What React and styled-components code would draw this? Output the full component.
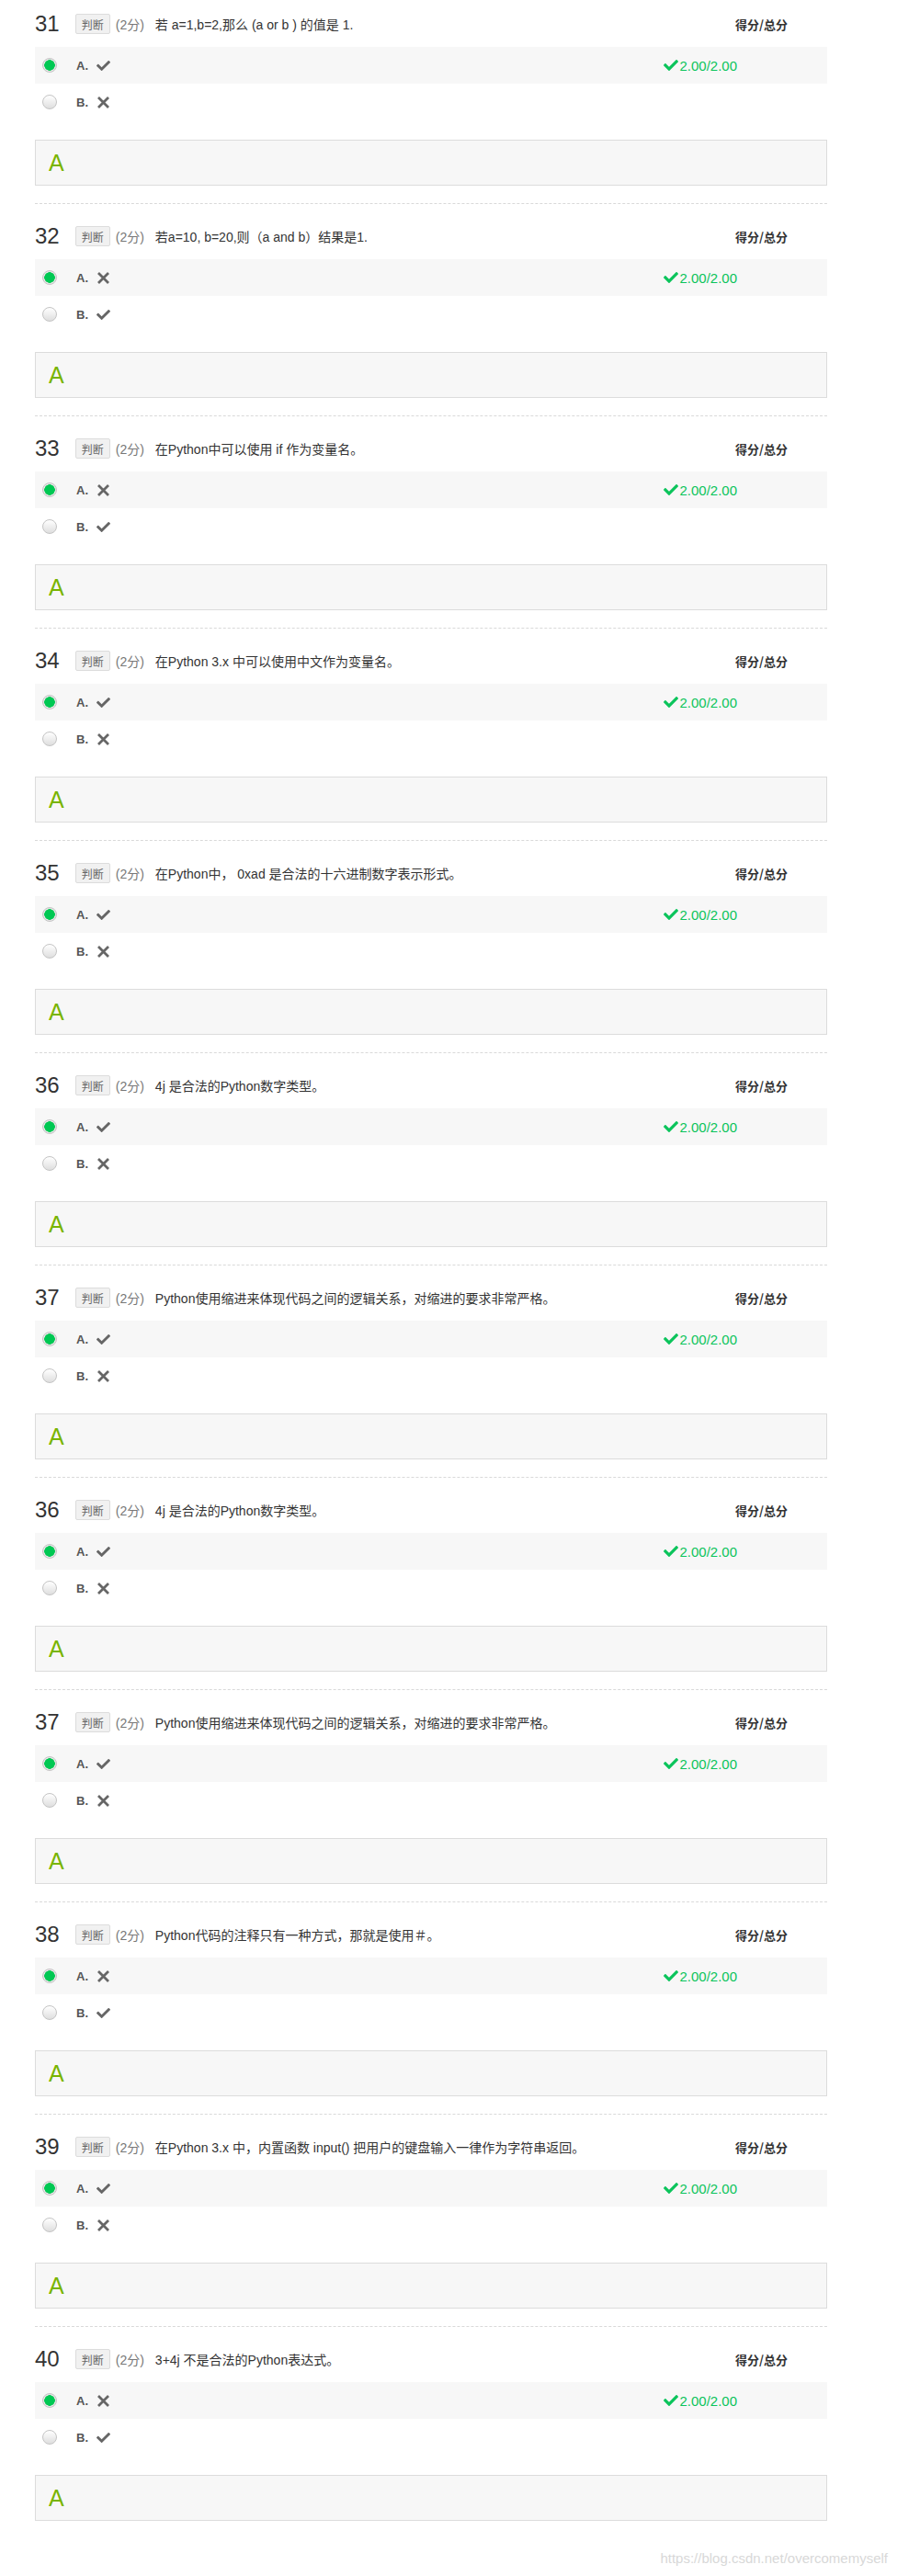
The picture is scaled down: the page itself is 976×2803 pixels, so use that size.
import React from "react";
import styled, { createGlobalStyle } from "styled-components";

const GlobalStyle = createGlobalStyle`
  body {
    margin: 0;
    background: #fff;
    font-family: "Liberation Sans", Arial, "Noto Sans CJK SC", sans-serif;
    color: #333;
  }
`;

const Page = styled.div`
  width: 976px;
  padding-left: 38px;
  box-sizing: border-box;
`;

const List = styled.div`
  width: 862px;
`;

const Question = styled.div`
  padding-top: 10px;
  height: ${(p) => (p.last ? "192px" : "211px")};
  border-bottom: ${(p) => (p.last ? "none" : "1px dashed #d9d9d9")};
  margin-bottom: ${(p) => (p.last ? "0" : "9px")};
`;

const Header = styled.div`
  display: flex;
  align-items: center;
  height: 32px;
  margin-bottom: 9px;
`;

const Num = styled.span`
  font-size: 24px;
  color: #333;
  margin-right: 17px;
  line-height: 1;
`;

const Badge = styled.span`
  display: inline-flex;
  align-items: center;
  justify-content: center;
  height: 22px;
  padding: 0 6px;
  box-sizing: border-box;
  border: 1px solid #dcdcdc;
  border-radius: 2px;
  background: #f1f1f1;
  color: #666;
  font-size: 12px;
  font-family: "Noto Sans CJK SC", sans-serif;
  margin-right: 6px;
`;

const Points = styled.span`
  font-size: 14px;
  color: #777;
  margin-right: 12px;
`;

const Stem = styled.span`
  font-size: 14px;
  color: #333;
`;

const ScoreHead = styled.span`
  margin-left: auto;
  margin-right: 43px;
  font-size: 13px;
  font-weight: bold;
  color: #333;
  font-family: "Noto Sans CJK SC", sans-serif;
`;

const Option = styled.div`
  display: flex;
  align-items: center;
  height: 40px;
  padding-left: 8px;
  background: ${(p) => (p.selected ? "#f7f7f7" : "#fff")};
`;

const Radio = styled.span`
  width: 16px;
  height: 16px;
  border-radius: 50%;
  box-sizing: border-box;
  border: 1px solid #c4c4c4;
  background: ${(p) =>
    p.checked
      ? "radial-gradient(circle, #00c853 0 5.5px, #e6e6e6 6px)"
      : "linear-gradient(#ffffff, #dedede)"};
  margin-right: 21px;
  flex-shrink: 0;
`;

const Letter = styled.span`
  font-size: 13px;
  font-weight: bold;
  color: #555;
  margin-right: 9px;
`;

const Score = styled.span`
  margin-left: auto;
  margin-right: 98px;
  display: flex;
  align-items: center;
  gap: 1px;
  font-size: 15px;
  color: #0bc45b;
`;

const AnswerBox = styled.div`
  margin-top: 21px;
  height: 50px;
  box-sizing: border-box;
  border: 1px solid #dcdcdc;
  background: #f7f7f7;
  display: flex;
  align-items: center;
  padding-left: 14px;
  font-size: 25px;
  color: #78b400;
`;

const Footer = styled.div`
  height: 60px;
  box-sizing: border-box;
  padding-top: 32px;
  text-align: right;
  padding-right: 10px;
  font-size: 15px;
  line-height: 18px;
  color: #d8d8d8;
`;

function Check({ color = "#666", size = 15 }) {
  return (
    <svg width={size} height={size} viewBox="0 0 512 512">
      <path
        fill={color}
        d="M173.9 439.4l-166.4-166.4c-10-10-10-26.2 0-36.2l36.2-36.2c10-10 26.2-10 36.2 0L192 312.7 432.1 72.6c10-10 26.2-10 36.2 0l36.2 36.2c10 10 10 26.2 0 36.2l-294.4 294.4c-10 10-26.2 10-36.2 0z"
      />
    </svg>
  );
}

function Cross() {
  return (
    <svg width="15" height="15" viewBox="0 0 15 15">
      <path d="M2 2L13 13M13 2L2 13" stroke="#666" strokeWidth="2.8" strokeLinecap="butt" />
    </svg>
  );
}

const questions = [
  { n: 31, text: "若 a=1,b=2,那么 (a or b ) 的值是 1.", a: true },
  { n: 32, text: "若a=10, b=20,则（a and b）结果是1.", a: false },
  { n: 33, text: "在Python中可以使用 if 作为变量名。", a: false },
  { n: 34, text: "在Python 3.x 中可以使用中文作为变量名。", a: true },
  { n: 35, text: "在Python中， 0xad 是合法的十六进制数字表示形式。", a: true },
  { n: 36, text: "4j 是合法的Python数字类型。", a: true },
  { n: 37, text: "Python使用缩进来体现代码之间的逻辑关系，对缩进的要求非常严格。", a: true },
  { n: 36, text: "4j 是合法的Python数字类型。", a: true },
  { n: 37, text: "Python使用缩进来体现代码之间的逻辑关系，对缩进的要求非常严格。", a: true },
  { n: 38, text: "Python代码的注释只有一种方式，那就是使用＃。", a: false },
  { n: 39, text: "在Python 3.x 中，内置函数 input() 把用户的键盘输入一律作为字符串返回。", a: true },
  { n: 40, text: "3+4j 不是合法的Python表达式。", a: false },
];

function Mark({ ok }) {
  return ok ? <Check /> : <Cross />;
}

export default function App() {
  return (
    <Page>
      <GlobalStyle />
      <List>
        {questions.map((q, i) => (
          <Question key={i} last={i === questions.length - 1}>
            <Header>
              <Num>{q.n}</Num>
              <Badge>判断</Badge>
              <Points>(2分)</Points>
              <Stem>{q.text}</Stem>
              <ScoreHead>得分/总分</ScoreHead>
            </Header>
            <Option selected>
              <Radio checked />
              <Letter>A.</Letter>
              <Mark ok={q.a} />
              <Score>
                <Check color="#0bc45b" size={16} />
                2.00/2.00
              </Score>
            </Option>
            <Option>
              <Radio />
              <Letter>B.</Letter>
              <Mark ok={!q.a} />
            </Option>
            <AnswerBox>A</AnswerBox>
          </Question>
        ))}
      </List>
      <Footer>https://blog.csdn.net/overcomemyself</Footer>
    </Page>
  );
}
